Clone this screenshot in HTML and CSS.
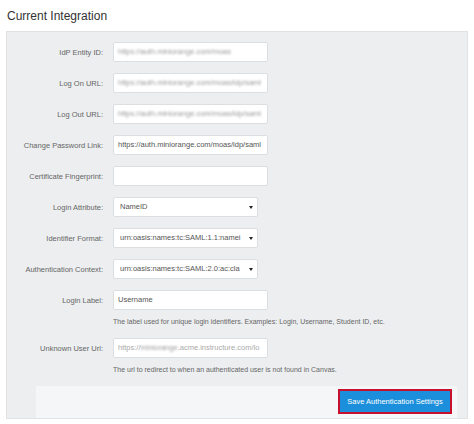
FILE: index.html
```html
<!DOCTYPE html>
<html>
<head>
<meta charset="utf-8">
<link rel="stylesheet" href="styles.css">
</head>
<body>
<h2 class="title">Current Integration</h2>
<div class="panel">
  <div class="row">
    <label class="lbl">IdP Entity ID:</label>
    <div class="input"><span class="blur">https://auth.miniorange.com/moas</span></div>
  </div>
  <div class="row">
    <label class="lbl">Log On URL:</label>
    <div class="input"><span class="blur">https://auth.miniorange.com/moas/idp/saml</span></div>
  </div>
  <div class="row">
    <label class="lbl">Log Out URL:</label>
    <div class="input"><span class="blur">https://auth.miniorange.com/moas/idp/saml</span></div>
  </div>
  <div class="row">
    <label class="lbl">Change Password Link:</label>
    <div class="input">https://auth.miniorange.com/moas/idp/saml</div>
  </div>
  <div class="row">
    <label class="lbl">Certificate Fingerprint:</label>
    <div class="input"></div>
  </div>
  <div class="row">
    <label class="lbl">Login Attribute:</label>
    <div class="select"><span class="val">NameID</span></div>
  </div>
  <div class="row">
    <label class="lbl">Identifier Format:</label>
    <div class="select"><span class="val">urn:oasis:names:tc:SAML:1.1:namei</span></div>
  </div>
  <div class="row">
    <label class="lbl">Authentication Context:</label>
    <div class="select"><span class="val">urn:oasis:names:tc:SAML:2.0:ac:cla</span></div>
  </div>
  <div class="row">
    <label class="lbl">Login Label:</label>
    <div class="input">Username</div>
  </div>
  <p class="help">The label used for unique login identifiers. Examples: Login, Username, Student ID, etc.</p>
  <div class="row">
    <label class="lbl">Unknown User Url:</label>
    <div class="input light">https://<span class="blur">miniorange</span>.acme.instructure.com/lo</div>
  </div>
  <p class="help">The url to redirect to when an authenticated user is not found in Canvas.</p>
  <div class="footer">
    <button class="btn">Save Authentication Settings</button>
  </div>
</div>
</body>
</html>
```
FILE: styles.css
```css
* { box-sizing: border-box; }
html, body { margin: 0; padding: 0; background: #fff; }
body {
  font-family: "Liberation Sans", Arial, sans-serif;
  width: 474px;
  height: 424px;
  overflow: hidden;
}
.title {
  margin: 0;
  padding: 9px 0 0 7px;
  height: 31px;
  font-size: 12px;
  line-height: 14px;
  font-weight: normal;
  color: #333;
}
.panel {
  margin-left: 6px;
  width: 462px;
  height: 388px;
  background: #eceef0;
  border: 1px solid #e0e2e4;
  padding: 10px 0 1px 0;
}
.row {
  display: grid;
  grid-template-columns: 96px auto;
  column-gap: 10px;
  align-items: center;
  height: 20px;
  margin-bottom: 11px;
}
.lbl {
  text-align: right;
  font-size: 7.5px;
  color: #666;
  white-space: nowrap;
}
.input {
  width: 155px;
  height: 20px;
  background: #fff;
  border: 1px solid #dcdfe2;
  border-radius: 2px;
  padding: 0 4px;
  font-size: 7.5px;
  line-height: 18px;
  color: #555;
  white-space: nowrap;
  overflow: hidden;
}
.input.light { color: #aaa; }
.blur {
  filter: blur(1.1px);
  color: #999;
  display: inline-block;
}
.select {
  position: relative;
  width: 145px;
  height: 20px;
  background: #fff;
  border: 1px solid #dcdfe2;
  border-radius: 2px;
  padding: 0 16px 0 6px;
  font-size: 7.5px;
  line-height: 18px;
  color: #555;
  white-space: nowrap;
  overflow: hidden;
}
.select .val { display: block; overflow: hidden; }
.select::after {
  content: "";
  position: absolute;
  right: 4px;
  top: 8px;
  border-left: 2px solid transparent;
  border-right: 2px solid transparent;
  border-top: 3px solid #222;
}
.help {
  margin: -5px 0 10px 106px;
  font-size: 7px;
  line-height: 12px;
  color: #666;
  white-space: nowrap;
}
.footer {
  margin: 0 10px 0 29px;
  height: 32px;
  background: #f5f6f7;
  display: flex;
  justify-content: flex-end;
  align-items: center;
  padding-right: 5px;
  padding-bottom: 1px;
}
.btn {
  width: 114px;
  height: 25px;
  background: #1b8fdc;
  border: 2px solid #c8102e;
  color: #fff;
  font-family: "Liberation Sans", Arial, sans-serif;
  font-size: 7.5px;
  padding: 0;
  white-space: nowrap;
}
```
